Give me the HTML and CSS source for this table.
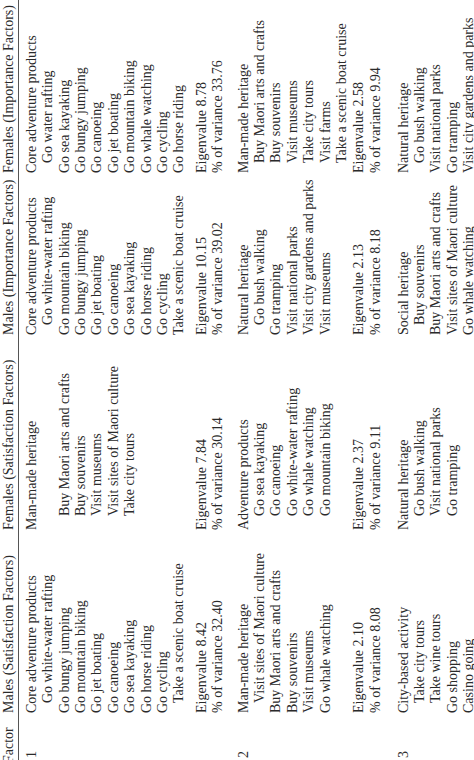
FILE: index.html
```html
<!DOCTYPE html>
<html>
<head>
<meta charset="utf-8">
<link rel="stylesheet" href="styles.css">
</head>
<body>
<div class="page">
  <div class="tbl">
    <div class="hd">Factor</div>
    <div class="hd">Males (Satisfaction Factors)</div>
    <div class="hd">Females (Satisfaction Factors)</div>
    <div class="hd">Males (Importance Factors)</div>
    <div class="hd">Females (Importance Factors)</div>

    <div class="items r1 num">1</div>
    <div class="items r1">
      <div>Core adventure products</div>
      <div class="in">Go white-water rafting</div>
      <div>Go bungy jumping</div>
      <div>Go mountain biking</div>
      <div>Go jet boating</div>
      <div>Go canoeing</div>
      <div>Go sea kayaking</div>
      <div>Go horse riding</div>
      <div>Go cycling</div>
      <div class="in">Take a scenic boat cruise</div>
    </div>
    <div class="items r1">
      <div>Man-made heritage</div>
      <div class="blank"></div>
      <div class="in2">Buy Maori arts and crafts</div>
      <div class="in2">Buy souvenirs</div>
      <div class="in2">Visit museums</div>
      <div class="in2">Visit sites of Maori culture</div>
      <div class="in2">Take city tours</div>
    </div>
    <div class="items r1">
      <div>Core adventure products</div>
      <div class="in">Go white-water rafting</div>
      <div>Go mountain biking</div>
      <div>Go bungy jumping</div>
      <div>Go jet boating</div>
      <div>Go canoeing</div>
      <div>Go sea kayaking</div>
      <div>Go horse riding</div>
      <div>Go cycling</div>
      <div>Take a scenic boat cruise</div>
    </div>
    <div class="items r1">
      <div>Core adventure products</div>
      <div class="in">Go water rafting</div>
      <div>Go sea kayaking</div>
      <div>Go bungy jumping</div>
      <div>Go canoeing</div>
      <div>Go jet boating</div>
      <div>Go mountain biking</div>
      <div>Go whale watching</div>
      <div>Go cycling</div>
      <div>Go horse riding</div>
    </div>

    <div class="ev e1"></div>
    <div class="ev e1"><div>Eigenvalue 8.42</div><div>% of variance 32.40</div></div>
    <div class="ev e1"><div>Eigenvalue 7.84</div><div>% of variance 30.14</div></div>
    <div class="ev e1"><div>Eigenvalue 10.15</div><div>% of variance 39.02</div></div>
    <div class="ev e1"><div>Eigenvalue 8.78</div><div>% of variance 33.76</div></div>

    <div class="items r2 num">2</div>
    <div class="items r2">
      <div>Man-made heritage</div>
      <div class="in">Visit sites of Maori culture</div>
      <div>Buy Maori arts and crafts</div>
      <div>Buy souvenirs</div>
      <div>Visit museums</div>
      <div>Go whale watching</div>
    </div>
    <div class="items r2">
      <div>Adventure products</div>
      <div class="in2">Go sea kayaking</div>
      <div class="in2">Go canoeing</div>
      <div class="in2">Go white-water rafting</div>
      <div class="in2">Go whale watching</div>
      <div class="in2">Go mountain biking</div>
    </div>
    <div class="items r2">
      <div>Natural heritage</div>
      <div class="in">Go bush walking</div>
      <div>Go tramping</div>
      <div>Visit national parks</div>
      <div>Visit city gardens and parks</div>
      <div>Visit museums</div>
    </div>
    <div class="items r2">
      <div>Man-made heritage</div>
      <div class="in">Buy Maori arts and crafts</div>
      <div class="in">Buy souvenirs</div>
      <div class="in">Visit museums</div>
      <div class="in">Take city tours</div>
      <div class="in">Visit farms</div>
      <div class="in">Take a scenic boat cruise</div>
    </div>

    <div class="ev e2"></div>
    <div class="ev e2"><div>Eigenvalue 2.10</div><div>% of variance 8.08</div></div>
    <div class="ev e2"><div>Eigenvalue 2.37</div><div>% of variance 9.11</div></div>
    <div class="ev e2"><div>Eigenvalue 2.13</div><div>% of variance 8.18</div></div>
    <div class="ev e2"><div>Eigenvalue 2.58</div><div>% of variance 9.94</div></div>

    <div class="items r3 num">3</div>
    <div class="items r3">
      <div>City-based activity</div>
      <div class="in">Take city tours</div>
      <div class="in">Take wine tours</div>
      <div>Go shopping</div>
      <div>Casino going</div>
    </div>
    <div class="items r3">
      <div>Natural heritage</div>
      <div class="in2">Go bush walking</div>
      <div class="in2">Visit national parks</div>
      <div class="in2">Go tramping</div>
    </div>
    <div class="items r3">
      <div>Social heritage</div>
      <div class="in">Buy souvenirs</div>
      <div>Buy Maori arts and crafts</div>
      <div>Visit sites of Maori culture</div>
      <div>Go whale watching</div>
    </div>
    <div class="items r3">
      <div>Natural heritage</div>
      <div class="in">Go bush walking</div>
      <div>Visit national parks</div>
      <div>Go tramping</div>
      <div>Visit city gardens and parks</div>
    </div>
  </div>
</div>
</body>
</html>
```

FILE: styles.css
```css
html, body {
  margin: 0;
  padding: 0;
  overflow: hidden;
  background: #ffffff;
}

body {
  width: 474px;
  height: 760px;
}

.page {
  width: 766px;
  height: 474px;
  transform-origin: 0 0;
  transform: translate(0, 763px) rotate(-90deg);
  font-family: "Liberation Serif", "Times New Roman", serif;
  font-size: 14px;
  line-height: 16.4px;
  color: #2a2a2a;
}

.tbl {
  display: grid;
  grid-template-columns: 50px 183px 195px 162px 176px;
  white-space: nowrap;
}

.hd {
  padding-top: 1px;
  padding-bottom: 0.5px;
  border-bottom: 1px solid #555555;
}

.items div,
.ev div {
  height: 16.4px;
}

.r1 {
  padding-top: 5px;
}

.r2 {
  padding-top: 9px;
}

.r3 {
  padding-top: 11.5px;
}

.e1 {
  padding-top: 6px;
}

.e2 {
  padding-top: 1px;
}

.num {
  padding-left: 5px;
}

.in {
  padding-left: 10px;
}

.in2 {
  padding-left: 14px;
}
```
